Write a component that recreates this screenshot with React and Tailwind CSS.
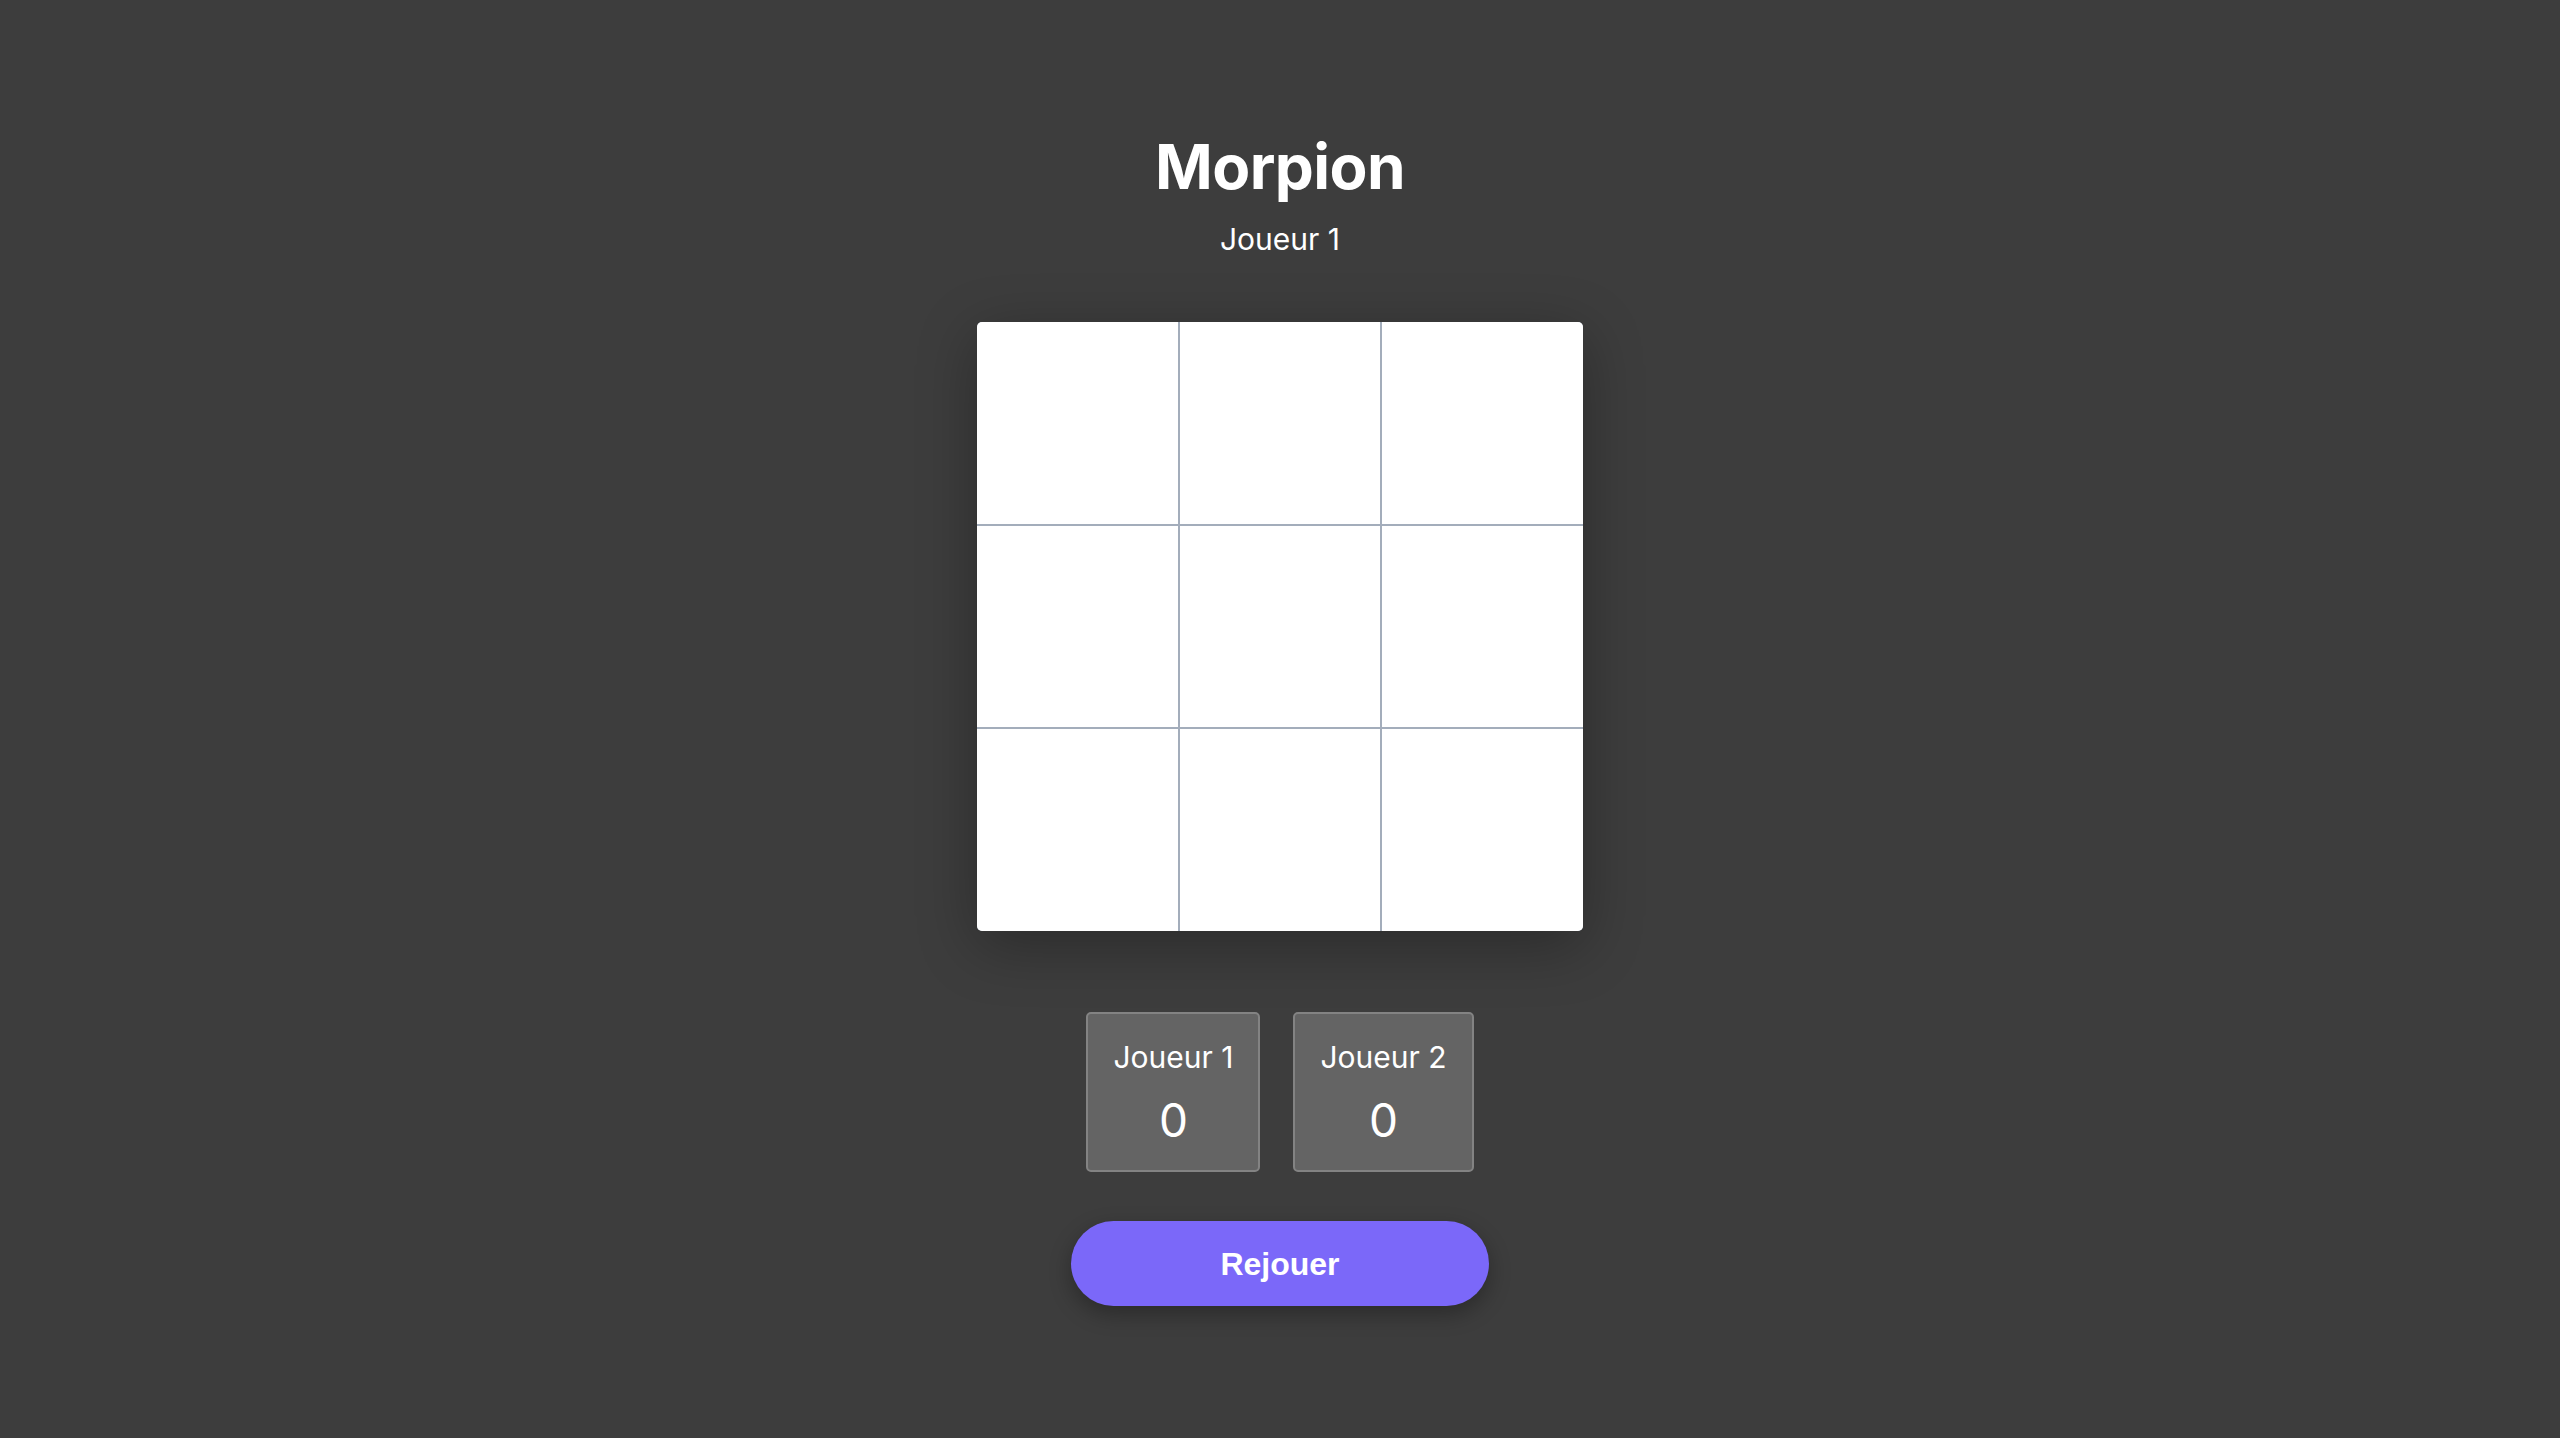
import React from 'react';

// Tic-tac-toe board with score cards and a replay button
const CELLS = Array.from({ length: 9 }, (_, i) => i);

function ScoreCard({ name, score }) {
  return (
    <div className="flex flex-col items-center rounded-[5px] border-2 border-[#838383] bg-[#646464] px-[25px] pt-[25px] pb-[22px]">
      <span className="text-[30px] leading-[36px] text-white">{name}</span>
      <span className="mt-[17px] text-[46px] leading-[56px] text-white">{score}</span>
    </div>
  );
}

export default function App() {
  const [board, setBoard] = React.useState(Array(9).fill(null));

  return (
    <div className="min-h-screen bg-[#3d3d3d] flex flex-col items-center pt-[131px] font-['Inter',sans-serif]">
      <h1 className="text-[62px] leading-[72px] font-bold tracking-[-0.6px] text-white">Morpion</h1>
      <p className="mt-[18px] text-[30px] leading-[36px] text-white">Joueur 1</p>

      {/* Board */}
      <div className="mt-[65px] grid h-[609px] w-[606px] grid-cols-3 grid-rows-3 gap-[2px] overflow-hidden rounded-[5px] bg-[#a3adbb] shadow-[0_14px_60px_rgba(0,0,0,0.3)]">
        {CELLS.map((i) => (
          <button
            key={i}
            className="bg-white"
            onClick={() => setBoard((b) => b.map((v, j) => (j === i && !v ? 'X' : v)))}
          >
            {board[i]}
          </button>
        ))}
      </div>

      {/* Scores */}
      <div className="mt-[81px] flex gap-[33px]">
        <ScoreCard name="Joueur 1" score="0" />
        <ScoreCard name="Joueur 2" score="0" />
      </div>

      <button
        className="mt-[49px] h-[85px] w-[418px] rounded-full bg-[#7b68f9] text-[32px] font-bold text-white font-['Liberation_Sans',Arial,sans-serif] shadow-[0_8px_22px_rgba(0,0,0,0.3)]"
        onClick={() => setBoard(Array(9).fill(null))}
      >
        Rejouer
      </button>
    </div>
  );
}
